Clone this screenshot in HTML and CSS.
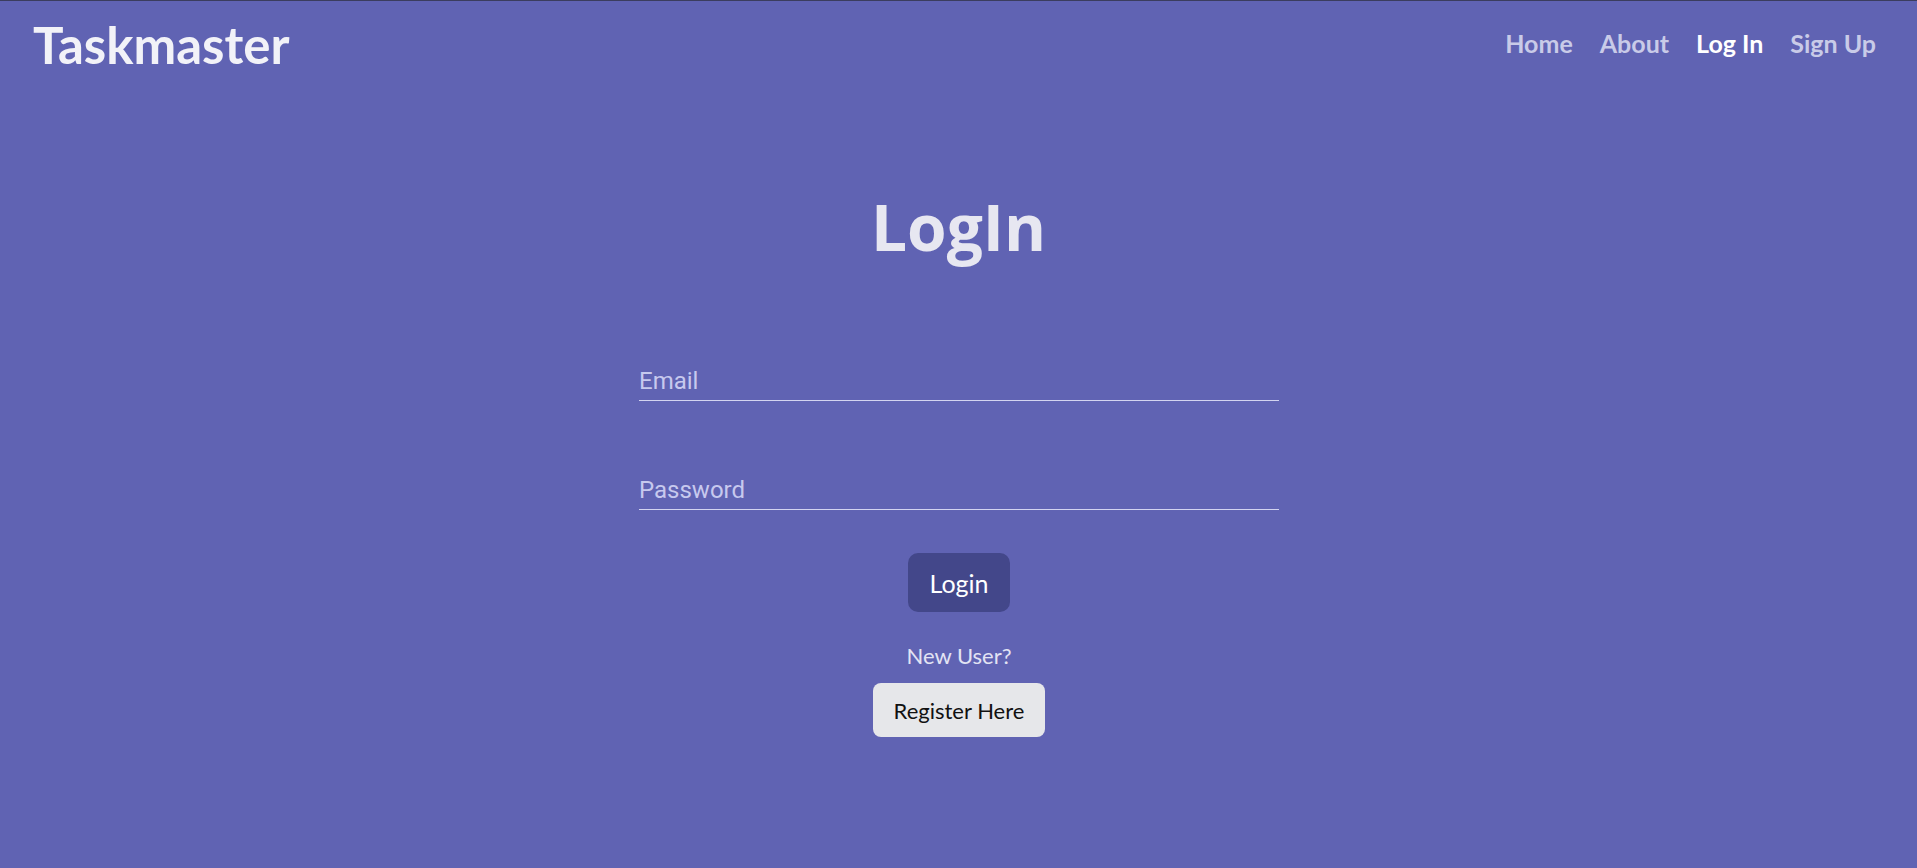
FILE: index.html
```html
<!DOCTYPE html>
<html lang="en">
<head>
<meta charset="utf-8">
<title>Taskmaster - Log In</title>
<link rel="stylesheet" href="styles.css">
</head>
<body>
<header class="navbar">
  <a class="brand" href="#">Taskmaster</a>
  <nav class="nav-links">
    <a class="nav-link" href="#">Home</a>
    <a class="nav-link" href="#">About</a>
    <a class="nav-link active" href="#">Log In</a>
    <a class="nav-link" href="#">Sign Up</a>
  </nav>
</header>
<main class="login-page">
  <h1 class="login-title">LogIn</h1>
  <form class="login-form">
    <input class="field" type="email" placeholder="Email">
    <input class="field field-password" type="password" placeholder="Password">
    <button class="btn-login" type="button">Login</button>
    <p class="new-user">New User?</p>
    <button class="btn-register" type="button">Register Here</button>
  </form>
</main>
</body>
</html>
```
FILE: styles.css
```css
html, body {
  margin: 0;
  padding: 0;
}
body {
  background: #6063b3;
  border-top: 1px solid #3b3d5e;
  min-height: 867px;
  font-family: Lato, "Open Sans", sans-serif;
}
.navbar {
  display: flex;
  justify-content: space-between;
  align-items: flex-start;
  padding: 14px 41px 0 33px;
}
.brand {
  font-family: Lato, sans-serif;
  font-weight: 700;
  font-size: 51px;
  line-height: 60px;
  color: #f2f2f8;
  text-decoration: none;
}
.nav-links {
  display: flex;
  gap: 27px;
  margin-top: 13px;
}
.nav-link {
  font-family: Lato, sans-serif;
  font-weight: 700;
  font-size: 25px;
  line-height: 30px;
  color: #c9cbe8;
  text-decoration: none;
}
.nav-link.active {
  color: #ffffff;
}
.login-page {
  display: flex;
  flex-direction: column;
  align-items: center;
}
.login-title {
  margin: 115px 0 0;
  font-family: "Open Sans", sans-serif;
  font-weight: 700;
  font-size: 64px;
  line-height: 74px;
  color: #e7e7f1;
}
.login-form {
  display: flex;
  flex-direction: column;
  align-items: center;
  width: 640px;
  margin-top: 97px;
  padding-left: 1px;
}
.field {
  box-sizing: border-box;
  width: 640px;
  height: 40px;
  padding: 0;
  margin: 0;
  border: none;
  border-bottom: 1px solid #d3d4f0;
  background: transparent;
  outline: none;
  font-family: Roboto, sans-serif;
  font-size: 24px;
  color: #ffffff;
}
.field::placeholder {
  color: #c7c9ee;
  opacity: 1;
}
.field-password {
  margin-top: 69px;
}
.btn-login {
  margin-top: 43px;
  width: 102px;
  height: 59px;
  border: none;
  border-radius: 10px;
  background: #43478a;
  color: #ffffff;
  font-family: Lato, sans-serif;
  font-size: 25px;
  padding: 0;
  cursor: pointer;
}
.new-user {
  margin: 31px 0 0;
  font-family: Lato, sans-serif;
  font-size: 22px;
  line-height: 26px;
  color: #e3e3f3;
}
.btn-register {
  margin-top: 14px;
  width: 172px;
  height: 54px;
  border: none;
  border-radius: 8px;
  background: #e6e7ea;
  color: #111111;
  font-family: Lato, sans-serif;
  font-size: 22px;
  padding: 0;
  cursor: pointer;
}
```
